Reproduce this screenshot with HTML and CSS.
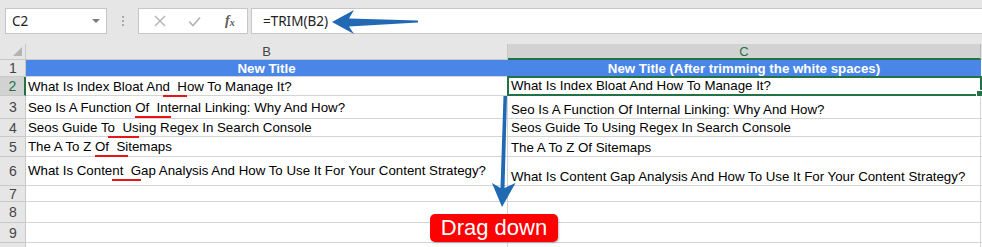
FILE: index.html
```html
<!DOCTYPE html>
<html>
<head>
<meta charset="utf-8">
<link rel="stylesheet" href="styles.css">
</head>
<body>
<div class="app">
  <div class="toolbar">
    <div class="namebox"><span class="ref">C2</span><span class="caret"></span></div>
    <div class="dots"><i></i><i></i><i></i></div>
    <div class="fxbox">
      <svg class="ico" width="12" height="12" viewBox="0 0 12 12"><path d="M1 1L11 11M11 1L1 11" stroke="#b3b3b3" stroke-width="1.4" fill="none"/></svg>
      <svg class="ico" width="13" height="11" viewBox="0 0 13 11"><path d="M1 5.5L5 9.5L12 1.5" stroke="#b3b3b3" stroke-width="1.6" fill="none"/></svg>
      <span class="fx">f<sub>x</sub></span>
    </div>
    <div class="formula">=TRIM(B2)</div>
    <svg class="arrow-left" width="90" height="28" viewBox="0 0 90 28"><path d="M0 13 L22 1 L17 9.5 L86 11.5 L86 13.5 L17 17.5 L22 25 Z" fill="#2169b3"/></svg>
  </div>

  <div class="sheet">
    <div class="corner"><span class="tri"></span></div>
    <div class="colhead">B</div>
    <div class="colhead active">C</div>
    <div class="edge head"></div>

    <div class="rowhead r1">1</div>
    <div class="cell title r1"><span class="t">New Title</span></div>
    <div class="cell title r1"><span class="t">New Title (After trimming the white spaces)</span></div>
    <div class="edge r1"></div>

    <div class="rowhead r2 active">2</div>
    <div class="cell r2"><span class="t">What Is Index Bloat An<span class="mark">d  H</span>ow To Manage It?</span></div>
    <div class="cell out sel r2"><span class="t">What Is Index Bloat And How To Manage It?</span></div>
    <div class="edge r2"></div>

    <div class="rowhead r3">3</div>
    <div class="cell r3"><span class="t">Seo Is A Function <span class="mark">Of  Int</span>ernal Linking: Why And How?</span></div>
    <div class="cell out r3"><span class="t">Seo Is A Function Of Internal Linking: Why And How?</span></div>
    <div class="edge r3"></div>

    <div class="rowhead r4">4</div>
    <div class="cell r4"><span class="t">Seos Guide T<span class="mark">o  Us</span>ing Regex In Search Console</span></div>
    <div class="cell out r4"><span class="t">Seos Guide To Using Regex In Search Console</span></div>
    <div class="edge r4"></div>

    <div class="rowhead r5">5</div>
    <div class="cell r5"><span class="t">The A To Z <span class="mark">Of  Si</span>temaps</span></div>
    <div class="cell out r5"><span class="t">The A To Z Of Sitemaps</span></div>
    <div class="edge r5"></div>

    <div class="rowhead r6">6</div>
    <div class="cell r6"><span class="t">What Is Conte<span class="mark">nt  G</span>ap Analysis And How To Use It For Your Content Strategy?</span></div>
    <div class="cell out r6"><span class="t">What Is Content Gap Analysis And How To Use It For Your Content Strategy?</span></div>
    <div class="edge r6"></div>

    <div class="rowhead r7">7</div>
    <div class="cell r7"></div>
    <div class="cell r7"></div>
    <div class="edge r7"></div>

    <div class="rowhead r8">8</div>
    <div class="cell r8"></div>
    <div class="cell r8"></div>
    <div class="edge r8"></div>

    <div class="rowhead r9">9</div>
    <div class="cell r9"></div>
    <div class="cell r9"></div>
    <div class="edge r9"></div>

    <div class="rowhead r10"></div>
    <div class="cell r10"></div>
    <div class="cell r10"></div>
    <div class="edge r10"></div>

    <svg class="arrow-down" width="26" height="114" viewBox="0 0 26 114"><path d="M11.5 0 L15 0 L12.5 92 L23.5 87 L10 111 L0 87 L8.5 92 Z" fill="#2169b3"/></svg>
    <div class="badge">Drag down</div>
  </div>
</div>
</body>
</html>
```

FILE: styles.css
```css
* { box-sizing: border-box; }
html, body { margin: 0; padding: 0; }
body {
  width: 982px;
  height: 247px;
  overflow: hidden;
  background: #e6e6e6;
  font-family: "Liberation Sans", Arial, sans-serif;
}
.app { width: 982px; height: 247px; overflow: hidden; }

.toolbar {
  position: relative;
  height: 44px;
  display: flex;
  align-items: flex-start;
  padding: 8px 0 0 5px;
  background: #e6e6e6;
  font-family: "Noto Sans", "Open Sans", sans-serif;
  font-size: 13.5px;
  color: #222;
}
.namebox {
  width: 102px;
  height: 26px;
  background: #fff;
  border: 1px solid #c6c6c6;
  display: flex;
  align-items: center;
  justify-content: space-between;
  padding: 0 6px 0 6px;
}
.caret {
  width: 0; height: 0;
  border-left: 4px solid transparent;
  border-right: 4px solid transparent;
  border-top: 4px solid #7a7a7a;
}
.dots {
  width: 31px;
  height: 26px;
  display: flex;
  flex-direction: column;
  align-items: center;
  justify-content: center;
  gap: 2px;
}
.dots i { display: block; width: 2px; height: 2px; background: #a9a9a9; }
.fxbox {
  width: 110px;
  height: 26px;
  background: #fff;
  border: 1px solid #c6c6c6;
  display: flex;
  align-items: center;
  padding: 0 10px 0 15px;
  gap: 22px;
}
.fx {
  font-family: "Liberation Serif", serif;
  font-style: italic;
  font-weight: bold;
  font-size: 14px;
  color: #5b5b5b;
  margin-left: 2px;
}
.fx sub { font-size: 10px; vertical-align: -1px; }
.formula {
  margin-left: 3px;
  flex: 1;
  height: 26px;
  background: #fff;
  border: 1px solid #c6c6c6;
  border-right: none;
  display: flex;
  align-items: center;
  padding-left: 11px;
}
.arrow-left { position: absolute; left: 332px; top: 9px; }

.sheet {
  position: relative;
  display: grid;
  grid-template-columns: 26px 482px 473px 1px;
  grid-template-rows: 16px 17px 19px 23px 18px 20px 29px 16px 21px 20px 20px;
  background: #fff;
  font-size: 13.3px;
  color: #000;
}
.corner {
  background: #e6e6e6;
  border-right: 1px solid #c8c8c8;
  border-bottom: 1px solid #c8c8c8;
  position: relative;
}
.tri {
  position: absolute;
  right: 3px; bottom: 3px;
  width: 0; height: 0;
  border-left: 9px solid transparent;
  border-bottom: 9px solid #b4b4b4;
}
.colhead {
  background: #e6e6e6;
  border-right: 1px solid #c8c8c8;
  border-bottom: 1px solid #c8c8c8;
  text-align: center;
  color: #444;
  font-size: 13px;
  line-height: 15px;
}
.colhead.active {
  background: #d2d2d2;
  color: #217346;
  border-bottom: 2px solid #217346;
  border-right-color: #b8b8b8;
}
.edge { background: #fff; border-bottom: 1px solid #d4d4d4; }
.edge.head { background: #e6e6e6; border-bottom: 1px solid #c8c8c8; }
.rowhead {
  background: #e6e6e6;
  border-right: 1px solid #c8c8c8;
  border-bottom: 1px solid #c8c8c8;
  color: #444;
  font-size: 14px;
  display: flex;
  align-items: center;
  justify-content: center;
  padding-left: 1px;
}
.rowhead.active {
  background: #d2d2d2;
  color: #217346;
  border-right: 2px solid #217346;
}
.cell {
  border-right: 1px solid #d4d4d4;
  border-bottom: 1px solid #d4d4d4;
  white-space: pre;
  display: flex;
  align-items: center;
  padding: 0 2px 0 2px;
  overflow: visible;
}
.cell.title {
  background: #4a86e8;
  color: #fff;
  font-weight: bold;
  justify-content: center;
  border-right-color: #4a86e8;
  border-bottom-color: #d4d4d4;
}
.cell.out { align-items: flex-end; padding-left: 3px; padding-bottom: 1px; }
.cell.sel { position: relative; align-items: center; }
.cell.sel::after {
  content: "";
  position: absolute;
  left: -1px; top: -1px; right: -2px; bottom: -1px;
  border: 2px solid #217346;
}
.cell.sel::before {
  content: "";
  position: absolute;
  right: -3px; bottom: -2px;
  width: 5px; height: 5px;
  background: #217346;
  border: 1px solid #fff;
  z-index: 1;
}
.mark {
  border-bottom: 2px solid #e8141a;
  padding-bottom: 1px;
}
.r6.cell:not(.out) { padding-bottom: 1px; }

.arrow-down { position: absolute; left: 492px; top: 52px; }
.badge {
  position: absolute;
  left: 430px;
  top: 170px;
  width: 128px;
  height: 28px;
  background: #ff0000;
  color: #fff;
  border-radius: 5px;
  font-size: 22px;
  line-height: 28px;
  text-align: center;
  box-shadow: 1px 1px 2px rgba(0,0,0,0.25);
}
```
